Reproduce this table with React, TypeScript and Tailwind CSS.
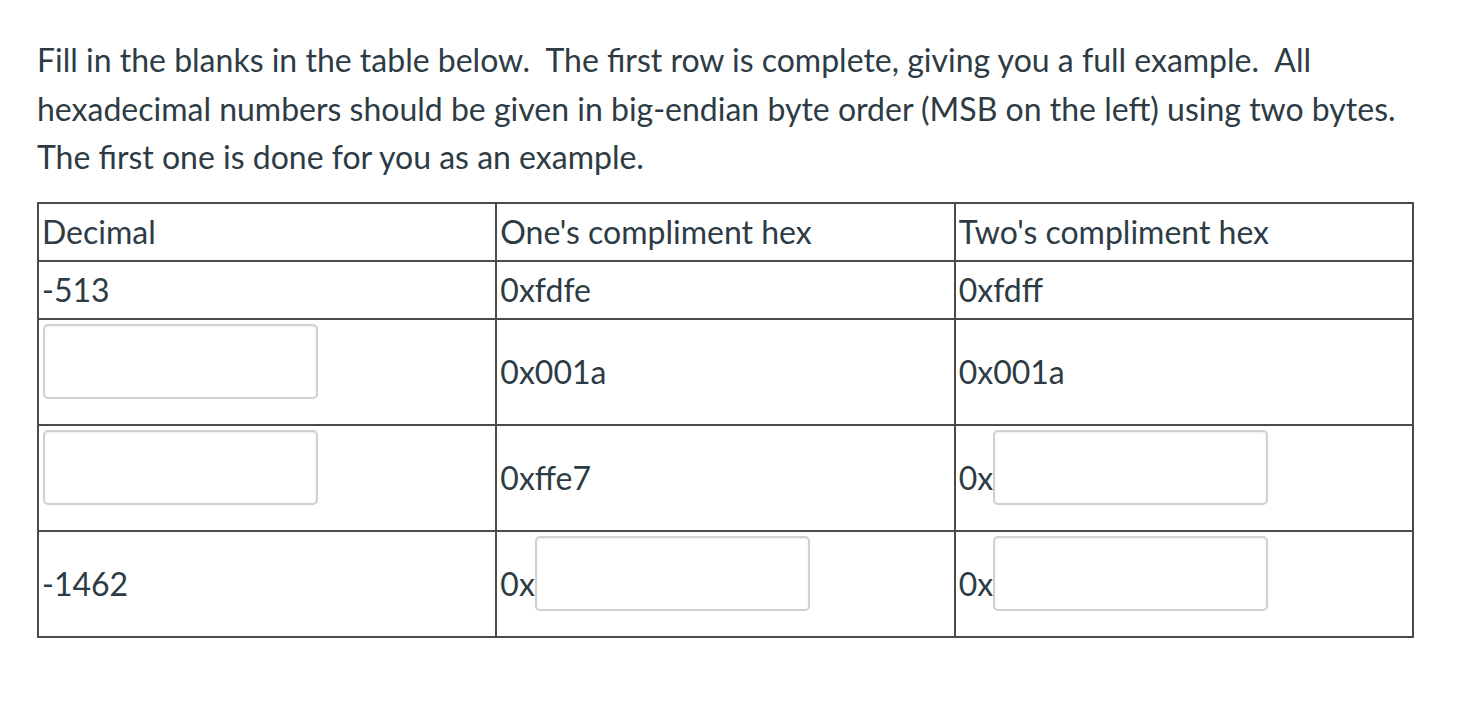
import React from "react";

const font = { fontFamily: "Lato, 'Noto Sans', sans-serif" };

function Blank() {
  return (
    <input
      type="text"
      className="w-[275px] shrink-0 h-[75px] mb-[20px] rounded-[5px] border-2 border-[#d0d0d0] bg-white shadow-[inset_0_1px_2px_rgba(0,0,0,0.08)] outline-none"
    />
  );
}

function Hex({ value }: { value?: string }) {
  if (value) return <span>{value}</span>;
  return (
    <div className="flex items-center">
      <span>0x</span>
      <Blank />
    </div>
  );
}

const rows: { dec?: string; one?: string; two?: string }[] = [
  { dec: undefined, one: "0x001a", two: "0x001a" },
  { dec: undefined, one: "0xffe7", two: undefined },
  { dec: "-1462", one: undefined, two: undefined },
];

export default function App() {
  const cell = "border-2 border-[#4b4b4b] px-[3px] align-middle";
  return (
    <div className="bg-white min-h-[708px] text-[#2d3b45] pl-[37px] pt-[36px]" style={font}>
      <p className="text-[32px] leading-[48.5px] whitespace-nowrap">
        Fill in the blanks in the table below.&nbsp; The first row is complete, giving you a full example.&nbsp; All
        <br />
        hexadecimal numbers should be given in big-endian byte order (MSB on the left) using two bytes.
        <br />
        The first one is done for you as an example.
      </p>
      <table className="mt-[20px] w-[1377px] border-collapse text-[32px] leading-[48px] table-fixed">
        <tbody>
          <tr className="h-[58px]">
            <td className={cell}>Decimal</td>
            <td className={cell}>One's compliment hex</td>
            <td className={cell}>Two's compliment hex</td>
          </tr>
          <tr className="h-[58px]">
            <td className={cell}>-513</td>
            <td className={cell}>0xfdfe</td>
            <td className={cell}>0xfdff</td>
          </tr>
          {rows.map((r, i) => (
            <tr key={i} className="h-[106px]">
              <td className={cell}>
                {r.dec ? <span>{r.dec}</span> : <div className="flex items-center pl-[1px]"><Blank /></div>}
              </td>
              <td className={cell}>
                <Hex value={r.one} />
              </td>
              <td className={cell}>
                <Hex value={r.two} />
              </td>
            </tr>
          ))}
        </tbody>
      </table>
    </div>
  );
}
